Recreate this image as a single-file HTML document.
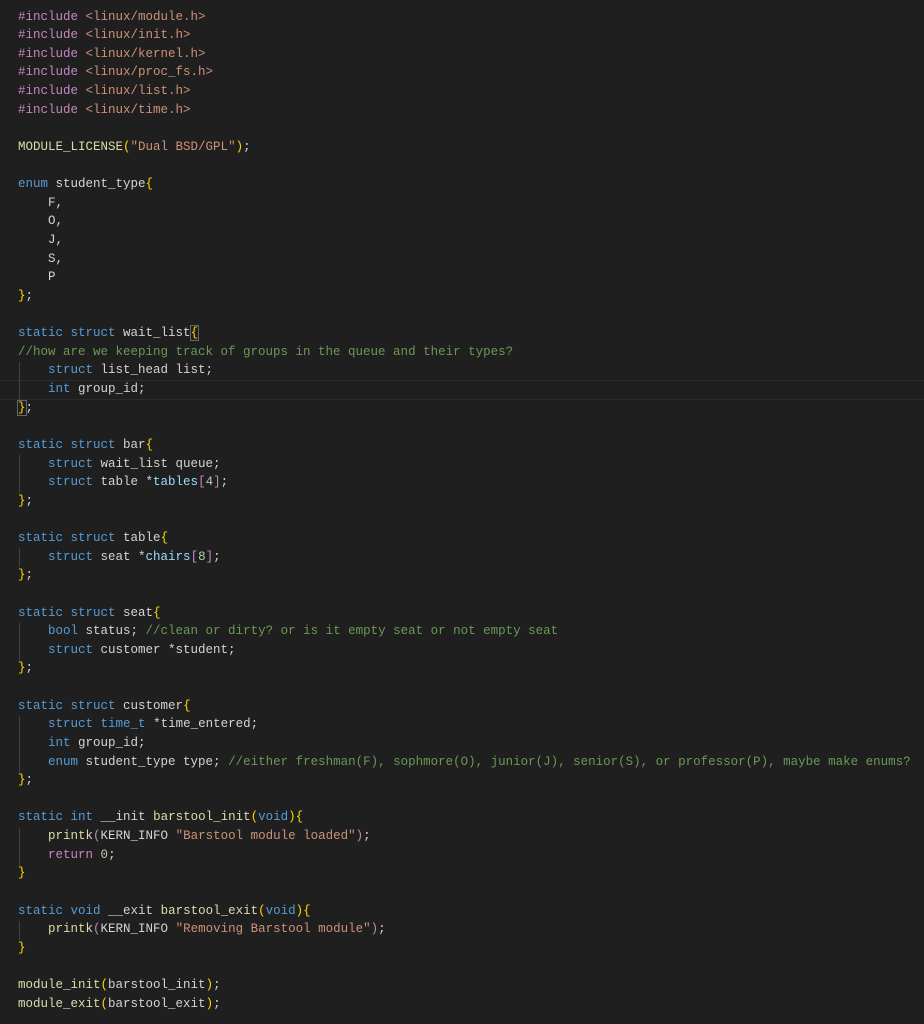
<!DOCTYPE html>
<html><head><meta charset="utf-8"><style>
html,body{margin:0;background:#1f1f1f;width:924px;height:1024px;overflow:hidden}
pre{margin:0;position:absolute;left:18px;top:7.5px;font-family:"Liberation Mono",monospace;font-size:12.5px;line-height:18.63px;color:#d4d4d4;white-space:pre}
.k{color:#569cd6}.p{color:#c586c0}.s{color:#ce9178}.f{color:#dcdcaa}.c{color:#6a9955}.b{color:#ffd700}.n{color:#b5cea8}.v{color:#9cdcfe}.t{color:#4ec9b0}
.hl{position:absolute;left:0;width:924px;top:380px;height:18px;border-top:1px solid #2c2c2c;border-bottom:1px solid #2c2c2c}
.g{position:absolute;left:19px;width:1px;background:#404040}
</style></head><body>
<div class="hl"></div>
<div class="g" style="top:362px;height:38px"></div>
<div class="g" style="top:455px;height:38px"></div>
<div class="g" style="top:548px;height:19px"></div>
<div class="g" style="top:623px;height:38px"></div>
<div class="g" style="top:716px;height:57px"></div>
<div class="g" style="top:828px;height:38px"></div>
<div class="g" style="top:921px;height:19px"></div>
<pre><span class="p">#include</span> <span class="s">&lt;linux/module.h&gt;</span>
<span class="p">#include</span> <span class="s">&lt;linux/init.h&gt;</span>
<span class="p">#include</span> <span class="s">&lt;linux/kernel.h&gt;</span>
<span class="p">#include</span> <span class="s">&lt;linux/proc_fs.h&gt;</span>
<span class="p">#include</span> <span class="s">&lt;linux/list.h&gt;</span>
<span class="p">#include</span> <span class="s">&lt;linux/time.h&gt;</span>

<span class="f">MODULE_LICENSE</span><span class="b">(</span><span class="s">"Dual BSD/GPL"</span><span class="b">)</span>;

<span class="k">enum</span> student_type<span class="b">{</span>
    F,
    O,
    J,
    S,
    P
<span class="b">}</span>;

<span class="k">static</span> <span class="k">struct</span> wait_list<span class="b" style="outline:1px solid #666">{</span>
<span class="c">//how are we keeping track of groups in the queue and their types?</span>
    <span class="k">struct</span> list_head list;
    <span class="k">int</span> group_id;
<span class="b" style="outline:1px solid #666">}</span>;

<span class="k">static</span> <span class="k">struct</span> bar<span class="b">{</span>
    <span class="k">struct</span> wait_list queue;
    <span class="k">struct</span> table *<span class="v">tables</span><span class="p">[</span><span class="n">4</span><span class="p">]</span>;
<span class="b">}</span>;

<span class="k">static</span> <span class="k">struct</span> table<span class="b">{</span>
    <span class="k">struct</span> seat *<span class="v">chairs</span><span class="p">[</span><span class="n">8</span><span class="p">]</span>;
<span class="b">}</span>;

<span class="k">static</span> <span class="k">struct</span> seat<span class="b">{</span>
    <span class="k">bool</span> status; <span class="c">//clean or dirty? or is it empty seat or not empty seat</span>
    <span class="k">struct</span> customer *student;
<span class="b">}</span>;

<span class="k">static</span> <span class="k">struct</span> customer<span class="b">{</span>
    <span class="k">struct</span> <span class="k">time_t</span> *time_entered;
    <span class="k">int</span> group_id;
    <span class="k">enum</span> student_type type; <span class="c">//either freshman(F), sophmore(O), junior(J), senior(S), or professor(P), maybe make enums?</span>
<span class="b">}</span>;

<span class="k">static</span> <span class="k">int</span> __init <span class="f">barstool_init</span><span class="b">(</span><span class="k">void</span><span class="b">){</span>
    <span class="f">printk</span><span class="p">(</span>KERN_INFO <span class="s">"Barstool module loaded"</span><span class="p">)</span>;
    <span class="p">return</span> <span class="n">0</span>;
<span class="b">}</span>

<span class="k">static</span> <span class="k">void</span> __exit <span class="f">barstool_exit</span><span class="b">(</span><span class="k">void</span><span class="b">){</span>
    <span class="f">printk</span><span class="p">(</span>KERN_INFO <span class="s">"Removing Barstool module"</span><span class="p">)</span>;
<span class="b">}</span>

<span class="f">module_init</span><span class="b">(</span>barstool_init<span class="b">)</span>;
<span class="f">module_exit</span><span class="b">(</span>barstool_exit<span class="b">)</span>;</pre>
</body></html>
